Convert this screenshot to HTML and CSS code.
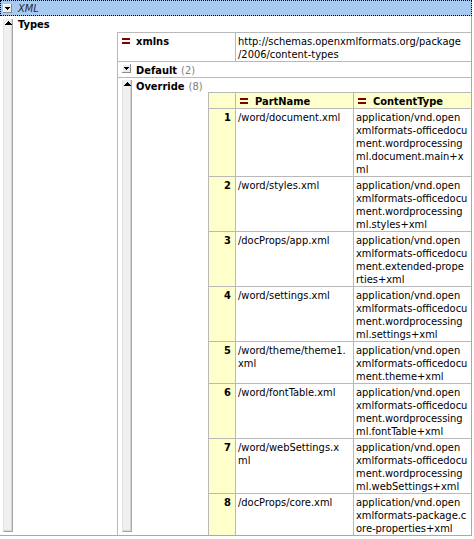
FILE: index.html
```html
<!DOCTYPE html>
<html>
<head>
<meta charset="utf-8">
<title>XML grid</title>
<link rel="stylesheet" href="styles.css">
</head>
<body>
<div class="doc">
  <div class="hdr">
    <svg class="tog hdr-tog" width="9" height="9" viewBox="0 0 9 9"><rect x="0" y="0" width="9" height="9" fill="#8c8c8c"/><rect x="0" y="0" width="8" height="8" fill="#ffffff"/><rect x="1" y="1" width="7" height="7" fill="#ececec"/><path d="M2 3h5v1h-1v1h-1v1h-1v-1h-1v-1h-1z" fill="#000"/></svg>
    <span class="hdr-title">XML</span>
  </div>
  <div class="el">
    <div class="gut"><svg class="tri" width="7" height="4" viewBox="0 0 7 4"><path d="M3 0h1v1h1v1h1v1h1v1H0v-1h1v-1h1v-1h1z" fill="#000"/></svg></div>
    <div class="el-main">
      <div class="el-name">Types</div>
      <div class="kids">
        <div class="cell attr-name">
          <svg class="eq" width="8" height="6" viewBox="0 0 8 6"><rect x="0" y="0" width="8" height="2" fill="#800000"/><rect x="0" y="4" width="8" height="2" fill="#800000"/></svg>
          <span class="nm">xmlns</span>
        </div>
        <div class="cell attr-val">http://schemas.openxmlformats.org/package<br>/2006/content-types</div>
        <div class="cell wide collapsed">
          <svg class="tog" width="9" height="9" viewBox="0 0 9 9"><rect x="0" y="0" width="9" height="9" fill="#8c8c8c"/><rect x="0" y="0" width="8" height="8" fill="#ffffff"/><rect x="1" y="1" width="7" height="7" fill="#ececec"/><path d="M2 3h5v1h-1v1h-1v1h-1v-1h-1v-1h-1z" fill="#000"/></svg>
          <span class="nm">Default</span><span class="cnt">(2)</span>
        </div>
        <div class="cell wide override">
          <div class="gut gut-inner"><svg class="tri" width="7" height="4" viewBox="0 0 7 4"><path d="M3 0h1v1h1v1h1v1h1v1H0v-1h1v-1h1v-1h1z" fill="#000"/></svg></div>
          <div class="el-main">
            <div class="el-name">Override<span class="cnt">(8)</span></div>
            <div class="tbl">
              <div class="tc idx"></div>
              <div class="tc th"><svg class="eq" width="8" height="6" viewBox="0 0 8 6"><rect x="0" y="0" width="8" height="2" fill="#800000"/><rect x="0" y="4" width="8" height="2" fill="#800000"/></svg><span class="nm">PartName</span></div>
              <div class="tc th"><svg class="eq" width="8" height="6" viewBox="0 0 8 6"><rect x="0" y="0" width="8" height="2" fill="#800000"/><rect x="0" y="4" width="8" height="2" fill="#800000"/></svg><span class="nm">ContentType</span></div>

              <div class="tc idx">1</div>
              <div class="tc">/word/document.xml</div>
              <div class="tc">application/vnd.open<br>xmlformats-officedocu<br>ment.wordprocessing<br>ml.document.main+x<br>ml</div>

              <div class="tc idx">2</div>
              <div class="tc">/word/styles.xml</div>
              <div class="tc">application/vnd.open<br>xmlformats-officedocu<br>ment.wordprocessing<br>ml.styles+xml</div>

              <div class="tc idx">3</div>
              <div class="tc">/docProps/app.xml</div>
              <div class="tc">application/vnd.open<br>xmlformats-officedocu<br>ment.extended-prope<br>rties+xml</div>

              <div class="tc idx">4</div>
              <div class="tc">/word/settings.xml</div>
              <div class="tc">application/vnd.open<br>xmlformats-officedocu<br>ment.wordprocessing<br>ml.settings+xml</div>

              <div class="tc idx">5</div>
              <div class="tc">/word/theme/theme1.<br>xml</div>
              <div class="tc">application/vnd.open<br>xmlformats-officedocu<br>ment.theme+xml</div>

              <div class="tc idx">6</div>
              <div class="tc">/word/fontTable.xml</div>
              <div class="tc">application/vnd.open<br>xmlformats-officedocu<br>ment.wordprocessing<br>ml.fontTable+xml</div>

              <div class="tc idx">7</div>
              <div class="tc">/word/webSettings.x<br>ml</div>
              <div class="tc">application/vnd.open<br>xmlformats-officedocu<br>ment.wordprocessing<br>ml.webSettings+xml</div>

              <div class="tc idx">8</div>
              <div class="tc">/docProps/core.xml</div>
              <div class="tc">application/vnd.open<br>xmlformats-package.c<br>ore-properties+xml</div>
            </div>
          </div>
        </div>
      </div>
    </div>
  </div>
</div>
</body>
</html>
```

FILE: styles.css
```css
* {
  box-sizing: border-box;
}

body {
  margin: 0;
  background: #ffffff;
  color: #000000;
  font-family: "DejaVu Sans Condensed", "DejaVu Sans", sans-serif;
  font-size: 11px;
  line-height: 13px;
}

.doc {
  width: 472px;
}

.hdr {
  height: 16px;
  border: 1px dotted #000000;
  background: #a6caf0;
  display: flex;
  align-items: flex-start;
}

.tog {
  display: block;
  flex: none;
}

.hdr-tog {
  margin: 3px 0 0 2px;
}

.hdr-title {
  font-style: italic;
  color: #2c2c2c;
  margin-left: 6px;
  padding-top: 1px;
}

.el {
  display: flex;
  border-right: 1px solid #a9a9a9;
  border-bottom: 1px solid #a9a9a9;
}

.gut {
  flex: none;
  width: 10px;
  margin: 3px 0 3px 3px;
  background: #f0f0f0;
  border-left: 1px solid #e2e2e2;
  border-right: 1px solid #a6a6a6;
  border-bottom: 1px solid #a6a6a6;
  box-shadow: inset -1px -1px 0 #d6d6d6;
}

.gut .tri {
  display: block;
  margin: 2px 0 0 1px;
}

.el-main {
  flex: 1;
  display: flex;
  flex-direction: column;
  padding-top: 1px;
}

.el-name {
  font-weight: bold;
  padding-left: 5px;
  padding-top: 1px;
  height: 13px;
}

.cnt {
  font-weight: normal;
  color: #808080;
  margin-left: 4px;
}

.kids {
  margin-top: 2px;
  margin-left: 104px;
  display: grid;
  grid-template-columns: 118px 1fr;
}

.cell {
  border-left: 1px solid #b9b9b9;
  border-top: 1px solid #b9b9b9;
  padding: 2px 2px 0;
  min-height: 16px;
}

.attr-name {
  display: flex;
  align-items: flex-start;
}

.eq {
  display: block;
  flex: none;
  margin-top: 3px;
  margin-left: 2px;
  margin-right: 6px;
}

.nm {
  font-weight: bold;
}

.attr-val {
  white-space: nowrap;
}

.wide {
  grid-column: 1 / 3;
}

.collapsed {
  display: flex;
  align-items: flex-start;
}

.collapsed .tog {
  margin: 0 0 0 2px;
}

.collapsed .nm {
  margin-left: 5px;
}

.override {
  display: flex;
  padding: 0;
}

.gut-inner {
  margin: 2px 0 3px 4px;
}

.override .el-name {
  padding-left: 4px;
}

.tbl {
  margin-left: 76px;
  display: grid;
  grid-template-columns: 27px 118px 118px;
}

.tc {
  border-left: 1px solid #b9b9b9;
  border-top: 1px solid #b9b9b9;
  padding: 2px 2px 0;
  white-space: nowrap;
}

.idx {
  background: #ffffcc;
  font-weight: bold;
  text-align: right;
  padding-right: 4px;
}

.th {
  background: #ffffcc;
  display: flex;
  align-items: flex-start;
}

.th .eq {
  margin-left: 2px;
  margin-right: 7px;
}
```
